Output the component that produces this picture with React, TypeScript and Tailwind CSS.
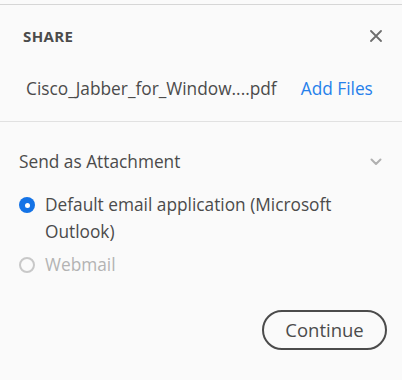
import React from "react";

export default function App() {
  return (
    <div
      className="w-[402px] h-[380px] bg-[#fafafa] text-[#4b4b4b] overflow-hidden"
      style={{ fontFamily: '"Open Sans", "Noto Sans", sans-serif' }}
    >
      <div className="h-[4px]" />
      <div className="border-t border-[#d6d6d6]">
        <div className="flex items-center justify-between pl-[23px] pr-[20px] pt-[21px]">
          <span className="text-[15px] leading-[20px] font-bold tracking-[0.4px]">SHARE</span>
          <svg width="12" height="12" viewBox="0 0 12 12" className="text-[#6e6e6e]">
            <path d="M1 1 L11 11 M11 1 L1 11" stroke="currentColor" strokeWidth="1.8" strokeLinecap="round" />
          </svg>
        </div>
        <div className="flex items-center pl-[26px] pt-[30px] pb-[19px]">
          <span className="text-[17.3px] leading-[26px]">Cisco_Jabber_for_Window....pdf</span>
          <span className="text-[17.3px] leading-[26px] text-[#2680eb] ml-[24px]">Add Files</span>
        </div>
      </div>
      <div className="border-t border-[#e1e1e1]">
        <div className="flex items-center justify-between pl-[19px] pr-[20px] pt-[27px]">
          <span className="text-[17.3px] leading-[26px]">Send as Attachment</span>
          <svg width="12" height="8" viewBox="0 0 12 8" className="text-[#b0b0b0]">
            <path d="M1.5 1.5 L6 6 L10.5 1.5" stroke="currentColor" strokeWidth="2" fill="none" strokeLinecap="round" strokeLinejoin="round" />
          </svg>
        </div>
        <div className="flex items-start pl-[19px] pt-[16px]">
          <span className="mt-[6px] w-[16px] h-[16px] rounded-full bg-[#1473e6] flex items-center justify-center shrink-0">
            <span className="w-[5px] h-[5px] rounded-full bg-white" />
          </span>
          <span className="ml-[10px] text-[17.3px] leading-[27px] w-[340px]">
            Default email application (Microsoft Outlook)
          </span>
        </div>
        <div className="flex items-center pl-[19px] pt-[6px]">
          <span className="w-[16px] h-[16px] rounded-full border-2 border-[#c8c8c8] shrink-0" />
          <span className="ml-[10px] text-[17.3px] leading-[27px] text-[#b3b3b3]">Webmail</span>
        </div>
        <div className="flex justify-end pr-[15px] pt-[32px]">
          <button className="w-[125px] h-[40px] rounded-full border-2 border-[#4b4b4b] text-[18.5px] text-[#4b4b4b]">
            Continue
          </button>
        </div>
      </div>
    </div>
  );
}
